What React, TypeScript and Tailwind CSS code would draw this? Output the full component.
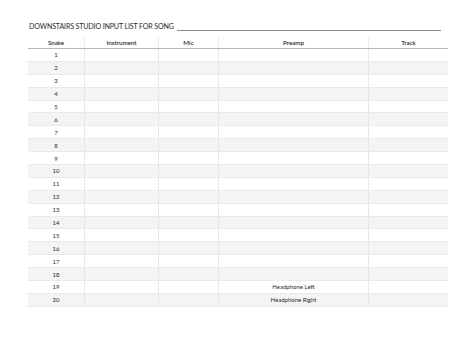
const rows = Array.from({ length: 20 }, (_, i) => ({
  snake: i + 1,
  preamp: i === 18 ? "Headphone Left" : i === 19 ? "Headphone Right" : "",
}));

const cols = ["w-[57px]", "w-[74px]", "w-[60px]", "w-[150px]", "w-[79px]"];

export default function App() {
  return (
    <div className="w-[474px] h-[363px] bg-white text-[#2a2a2a] font-['Lato','Liberation_Sans',sans-serif]">
      <div className="pt-[22px] pl-[29px] w-[441px] flex items-end">
        <span className="text-[7.1px] leading-[10px] tracking-[-0.15px] whitespace-nowrap">
          DOWNSTAIRS STUDIO INPUT LIST FOR SONG
        </span>
        <div className="flex-1 ml-[3px] mb-[1px] border-b border-[#8a8a8a]" />
      </div>

      <div className="ml-[28px] mt-[5px] w-[420px] text-[6px]">
        <div className="flex h-[12px] border-b border-[#b8b8b8] font-semibold text-[6.2px]">
          {["Snake", "Instrument", "Mic", "Preamp", "Track"].map((h, i) => (
            <div
              key={h}
              className={`${cols[i]} flex items-center justify-center ${i < 4 ? "border-r border-[#ececec]" : ""}`}
            >
              {h}
            </div>
          ))}
        </div>
        {rows.map((r, idx) => (
          <div
            key={r.snake}
            className={`flex h-[12.9px] border-b border-[#e8ebea] ${idx % 2 === 1 ? "bg-[#f2f5f4]" : "bg-white"}`}
          >
            <div className={`${cols[0]} flex items-center justify-center border-r border-[#e6e8e7]`}>{r.snake}</div>
            <div className={`${cols[1]} border-r border-[#e6e8e7]`} />
            <div className={`${cols[2]} border-r border-[#e6e8e7]`} />
            <div className={`${cols[3]} flex items-center justify-center border-r border-[#e6e8e7]`}>{r.preamp}</div>
            <div className={cols[4]} />
          </div>
        ))}
      </div>
    </div>
  );
}
